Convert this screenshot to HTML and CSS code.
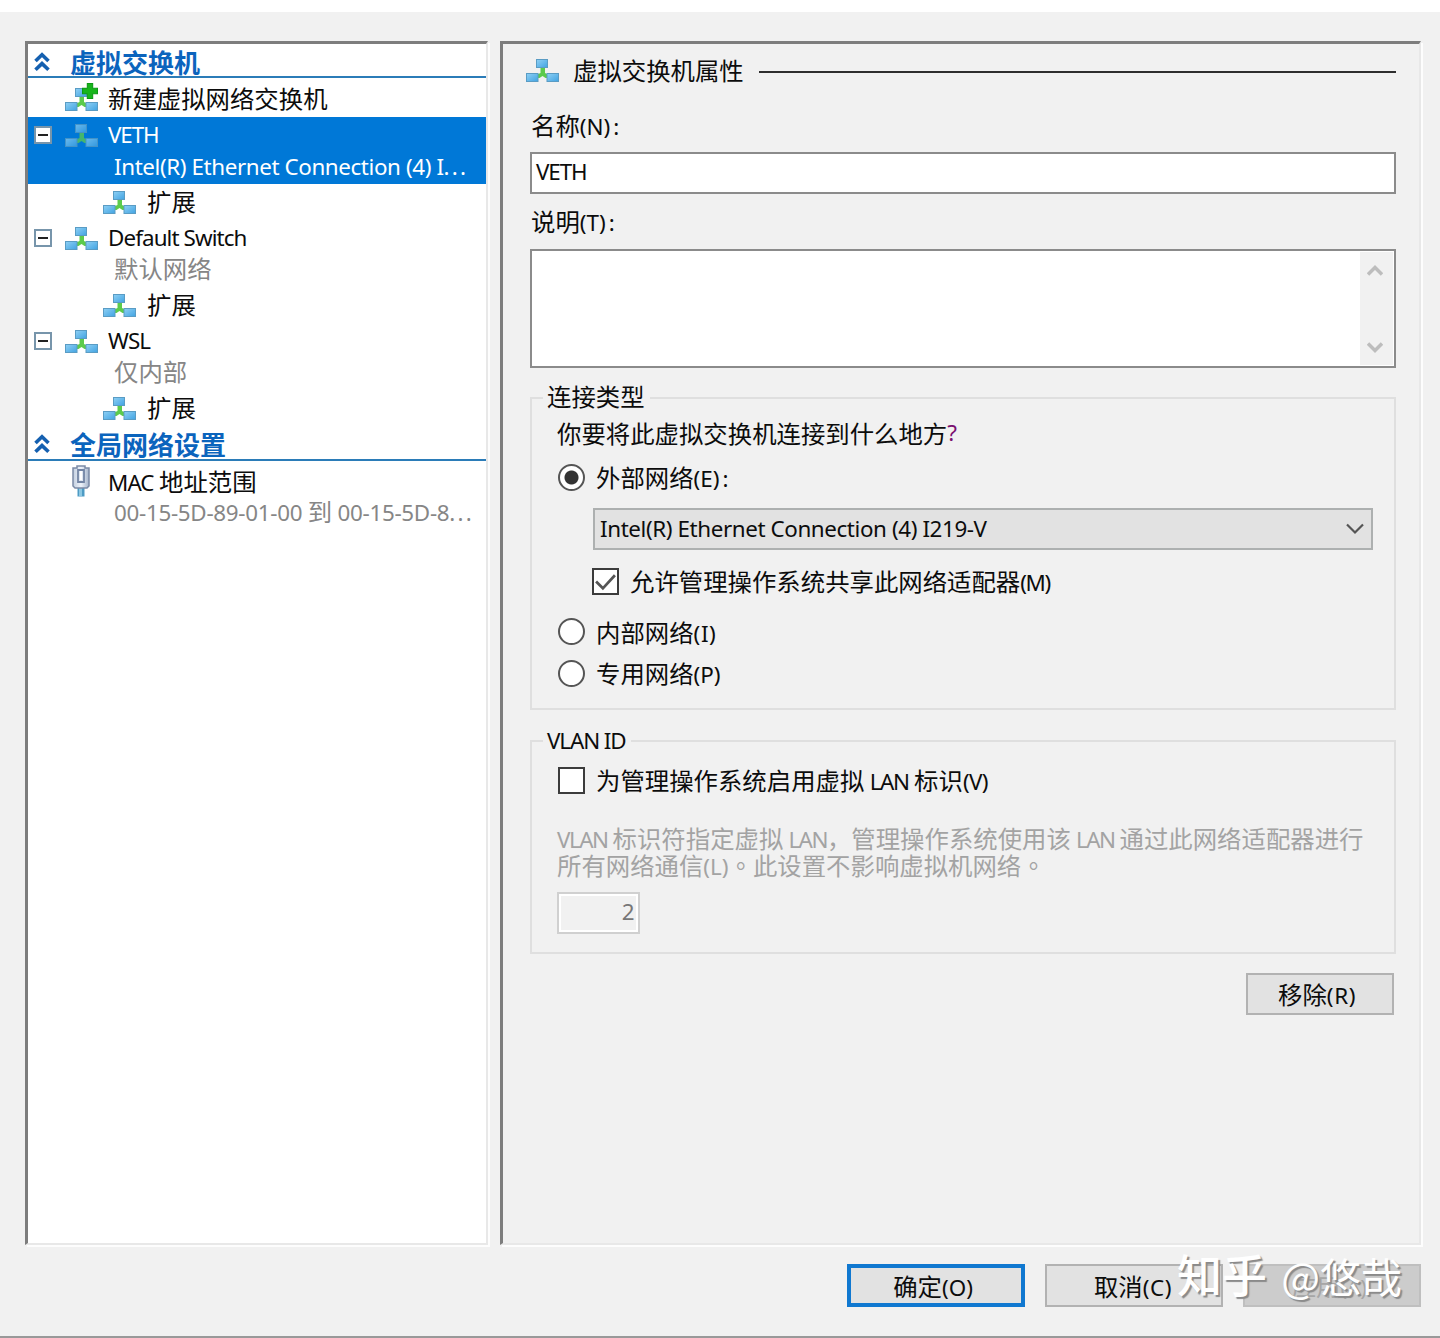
FILE: index.html
```html
<!DOCTYPE html>
<html lang="zh-CN">
<head>
<meta charset="utf-8">
<title>虚拟交换机管理器</title>
<link rel="stylesheet" href="styles.css">
</head>
<body>
<svg width="0" height="0" class="defs">
  <defs>
    <linearGradient id="blue" x1="0" y1="0" x2="1" y2="1">
      <stop offset="0" stop-color="#8fd0f4"/><stop offset="1" stop-color="#41a3e2"/>
    </linearGradient>
    <linearGradient id="plug" x1="0" y1="0" x2="1" y2="0">
      <stop offset="0" stop-color="#c3cfe0"/><stop offset=".5" stop-color="#eef3fa"/><stop offset="1" stop-color="#a3b3ca"/>
    </linearGradient>
    <symbol id="switch" viewBox="0 0 33 23">
      <path d="M14.500 8H19V14L23 16V19H19.500L16.500 17L13.500 19H10V16L14.500 14z" fill="#5ccb4c"/>
      <g fill="url(#blue)" stroke="#5a9cc4" stroke-width="1">
        <rect x="10.500" y=".5" width="11" height="8"/>
        <rect x=".5" y="14.500" width="11.500" height="8"/>
        <rect x="21" y="14.500" width="11.500" height="8"/>
      </g>
    </symbol>
    <symbol id="chevrons" viewBox="0 0 16 20">
      <path d="M1.500 9L8 2.800L14.500 9M1.500 17.800L8 11.600L14.500 17.800" fill="none" stroke="#1560b0" stroke-width="3.600"/>
    </symbol>
  </defs>
</svg>
<main class="dialog">
  <div class="panels">
    <nav class="panel tree">
      <div class="head"><svg class="chev"><use href="#chevrons"/></svg>虚拟交换机</div>
      <div class="row new"><span class="icon-wrap"><svg class="icon"><use href="#switch"/></svg><svg class="plus" viewBox="0 0 15 15"><path d="M5 .5h5V5h4.500v5H10v4.500H5V10H.5V5H5z" fill="#17b51c" stroke="#0c9a14"/></svg></span>新建虚拟网络交换机</div>
      <div class="item selected">
        <div class="row"><span class="toggle"></span><svg class="icon"><use href="#switch"/></svg><span class="en veth">VETH</span></div>
        <div class="sub"><span class="en long">Intel(R) Ethernet Connection (4) I<span class="dots">...</span></span></div>
      </div>
      <div class="row ext"><svg class="icon"><use href="#switch"/></svg>扩展</div>
      <div class="item">
        <div class="row"><span class="toggle"></span><svg class="icon"><use href="#switch"/></svg><span class="en default">Default Switch</span></div>
        <div class="sub">默认网络</div>
      </div>
      <div class="row ext"><svg class="icon"><use href="#switch"/></svg>扩展</div>
      <div class="item">
        <div class="row"><span class="toggle"></span><svg class="icon"><use href="#switch"/></svg><span class="en default">WSL</span></div>
        <div class="sub">仅内部</div>
      </div>
      <div class="row ext"><svg class="icon"><use href="#switch"/></svg>扩展</div>
      <div class="head second"><svg class="chev"><use href="#chevrons"/></svg>全局网络设置</div>
      <div class="row mac">
        <svg class="jack" viewBox="0 0 18 32"><path d="M5.500 23h7v8.500h-7z" fill="#4d9bc4"/><path d="M7 23h3v8H7z" fill="#8cc7e2"/><path d="M1 3H5V1H13V3H17V21L15 23H3L1 21z" fill="url(#plug)" stroke="#7b8ba6" stroke-width="1.500"/><path d="M6 5H12V17H6z" fill="#dfe7f2" stroke="#7385a5" stroke-width="1.800"/><path d="M9 6V15" stroke="#fff" stroke-width="2"/></svg>
        <span><span class="en default">MAC</span> 地址范围</span>
      </div>
      <div class="sub"><span class="en digits">00-15-5D-89-01-00</span> 到 <span class="en digits">00-15-5D-8<span class="dots">...</span></span></div>
    </nav>

    <section class="panel props">
      <h1 class="title"><svg class="icon"><use href="#switch"/></svg><span>虚拟交换机属性</span><i class="rule"></i></h1>
      <div class="label">名称<span class="en key">(N)<span class="colon">:</span></span></div>
      <div class="input"><span class="en veth">VETH</span></div>
      <div class="label desc">说明<span class="en key">(T)<span class="colon">:</span></span></div>
      <div class="textarea">
        <div class="scroll">
          <svg class="arrow" viewBox="0 0 16 12"><path d="M1 10.500L8 3.500L15 10.500" /></svg>
          <svg class="arrow" viewBox="0 0 16 12"><path d="M1 1.500L8 8.500L15 1.500" /></svg>
        </div>
      </div>

      <fieldset class="group type">
        <legend>连接类型</legend>
        <div class="line">你要将此虚拟交换机连接到什么地方<span class="en question">?</span></div>
        <div class="line"><span class="radio on"></span><span>外部网络<span class="en key">(E)<span class="colon">:</span></span></span></div>
        <div class="combo"><span class="en long">Intel(R) Ethernet Connection (4) I219-V</span><svg class="drop" viewBox="0 0 18 12"><path d="M1 1.500L9 9.500L17 1.500" /></svg></div>
        <div class="line share"><span class="check"><svg viewBox="0 0 22 22"><path d="M2 11L8.500 17.500L20 5" /></svg></span><span>允许管理操作系统共享此网络适配器<span class="en tight">(M)</span></span></div>
        <div class="line internal"><span class="radio"></span><span>内部网络<span class="en key wide">(I)</span></span></div>
        <div class="line"><span class="radio"></span><span>专用网络<span class="en key">(P)</span></span></div>
      </fieldset>

      <fieldset class="group vlan">
        <legend><span class="en veth">VLAN ID</span></legend>
        <div class="line enable"><span class="check"></span><span>为管理操作系统启用虚拟 <span class="en tight">LAN</span> 标识<span class="en">(V)</span></span></div>
        <p class="note"><span class="en">VLAN</span> 标识符指定虚拟 <span class="en">LAN</span>，管理操作系统使用该 <span class="en">LAN</span> 通过此网络适配器进行<br>所有网络通信<span class="en key">(L)</span><span lang="zh-TW" class="punct">。</span>此设置不影响虚拟机网络<span lang="zh-TW" class="punct">。</span></p>
        <div class="number"><span class="en">2</span></div>
      </fieldset>
      <div class="button remove"><span>移除<span class="en wide">(R)</span></span></div>
    </section>
  </div>

  <footer class="actions">
    <div class="button primary"><span>确定<span class="en key">(O)</span></span></div>
    <div class="button cancel"><span>取消<span class="en wide">(C)</span></span></div>
    <div class="button disabled"><span>应用<span class="en">(A)</span></span></div>
    <div class="watermark"><span class="brand">知乎</span> @悠哉</div>
  </footer>
</main>
</body>
</html>
```
FILE: styles.css
```css
* { box-sizing: border-box; }
body {
  margin: 0;
  padding-top: 12px;
  height: 1338px;
  background: #fff;
  color: #0c0c0c;
  font: 24.4px/26px "Noto Sans CJK SC", sans-serif;
  white-space: nowrap;
  overflow: hidden;
}
.defs { position: absolute; }
.dialog {
  height: 1326px;
  padding: 29px 19px 0 25px;
  background: #f1f1f1;
  border-bottom: 2px solid #999;
}

/* Latin runs, set slightly smaller than the Chinese text */
.en { font-family: "Noto Sans", sans-serif; font-size: 22.4px; line-height: 0; letter-spacing: -0.6px; }
.veth { letter-spacing: -1.1px; }
.default { letter-spacing: -0.9px; }
.long { letter-spacing: -0.4px; }
.digits { letter-spacing: -0.3px; }
.tight { letter-spacing: -1.4px; }
.key { letter-spacing: 0; }
.wide { letter-spacing: 0.6px; }
.dots { letter-spacing: 2.2px; }
.colon { margin-left: 3px; }
.question { color: #7a1070; }

.panels { display: flex; gap: 12px; height: 1204px; }
.panel {
  border: 3px solid;
  border-color: #7d7d7d #e8e8e8 #e8e8e8 #7d7d7d;
  border-right-width: 2px;
  border-bottom-width: 2px;
  box-shadow: 2px 2px 0 #fdfdfd;
}
.tree { width: 463px; background: #fff; }
.props { flex: 1; padding: 0 23px 0 27px; }

/* tree */
.head {
  display: flex;
  align-items: center;
  height: 34px;
  padding: 3px 0 0 6px;
  border-bottom: 2px solid #2b7cb8;
  color: #0b64bd;
  font-size: 26px;
  font-weight: 700;
}
.head.second { height: 35px; }
.chev { width: 16px; height: 20px; margin-right: 20px; }
.row { display: flex; align-items: center; height: 36px; }
.icon { width: 33px; height: 23px; flex: none; }
.new { height: 39px; padding: 1px 0 0 37px; }
.icon-wrap { position: relative; display: flex; margin: 2px 10px 0 0; }
.plus { position: absolute; left: 17px; top: -5px; width: 16px; height: 16px; }
.toggle {
  width: 18px;
  height: 18px;
  margin: 0 13px 0 6px;
  border: 2px solid #7795ab;
  background: linear-gradient(#222, #222) center / 10px 2px no-repeat #fff;
}
.item { height: 67px; }
.item .icon { margin-right: 10px; }
.sub { padding-left: 86px; line-height: 23px; color: #868686; }
.selected, .selected .sub { color: #fff; background: #0078d7; }
.selected .icon { opacity: .75; }
.ext { padding: 0 0 2px 75px; }
.ext .icon { margin: 2px 11px 0 0; }
.mac { height: 38px; padding: 2px 0 0 44px; }
.jack { width: 18px; height: 32px; margin-right: 18px; }

/* properties */
.title { display: flex; align-items: center; height: 54px; margin: 0 0 0 -4px; padding-bottom: 2px; font-size: 24.4px; font-weight: 400; }
.title .icon { margin: 1px 14px 0 0; }
.rule { flex: 1; height: 2px; margin: 3px 0 0 15px; background: #2e2e2e; }
.label { height: 54px; line-height: 53px; padding-left: 1px; }
.desc { height: 55px; }
.input, .textarea { border: 2px solid #8b8b8b; background: #fff; }
.input { display: flex; align-items: center; height: 42px; padding: 0 0 2px 4px; }
.textarea { display: flex; justify-content: flex-end; height: 119px; padding: 1px; }
.scroll {
  display: flex;
  flex-direction: column;
  align-items: center;
  justify-content: space-between;
  width: 33px;
  padding: 12px 3px 11px 0;
  background: #f1f1f1;
}
.arrow { width: 16px; height: 12px; fill: none; stroke: #bdbdbd; stroke-width: 3.5; }
.group { margin: 17px 0 0; padding: 0 0 0 26px; border: 2px solid #dfdfdf; min-width: 0; }
.type { height: 325px; }
.vlan { height: 226px; margin-top: 18px; }
legend { height: 26px; margin-left: -15px; padding: 0 5px 0 4px; line-height: 22px; }
.line { display: flex; align-items: center; height: 44px; margin-left: -1px; }
.radio {
  width: 27px;
  height: 27px;
  margin: 0 11px 0 1px;
  border: 2px solid #555;
  border-radius: 50%;
  background: #fff;
}
.radio.on { background: radial-gradient(circle, #333 6.5px, #fff 7.5px); }
.combo {
  display: flex;
  align-items: center;
  justify-content: space-between;
  height: 42px;
  margin: 9px 21px 0 35px;
  padding: 0 7px 0 5px;
  border: 2px solid #adb0b0;
  background: #e2e2e2;
}
.drop { width: 18px; height: 12px; fill: none; stroke: #555; stroke-width: 2.2; }
.check { width: 27px; height: 27px; margin: 0 11px 0 1px; border: 2px solid #3c3c3c; background: #fff; }
.check svg { display: block; width: 23px; height: 23px; fill: none; stroke: #555; stroke-width: 2.6; }
.share { height: 62px; margin-left: 33px; }
.internal { height: 39px; }
.enable { height: 52px; }
.note { margin: 18px 0 14px -1px; line-height: 27px; word-spacing: -0.4px; color: #a3a3a3; }
.note .en:not(.key) { letter-spacing: -1.5px; }
.punct { font-family: "Noto Sans CJK TC", sans-serif; line-height: 0; }
.number {
  display: flex;
  align-items: center;
  justify-content: flex-end;
  width: 83px;
  height: 42px;
  margin-left: -1px;
  padding: 0 4px 2px 0;
  border: 2px solid #d0d0d0;
  box-shadow: inset 0 0 0 2px #fff;
  color: #777;
}
.button {
  display: flex;
  align-items: center;
  justify-content: center;
  width: 178px;
  height: 43px;
  border: 2px solid #b2b2b2;
  background: #e2e2e2;
}
.remove { width: 148px; height: 42px; margin: 19px 2px 0 auto; padding-right: 6px; }
.actions { position: relative; display: flex; justify-content: flex-end; gap: 20px; margin-top: 19px; }
.actions .button { padding-right: 6px; }
.actions .cancel { padding-right: 2px; }
.primary { border: 4px solid #1078d0; }
.disabled { border-color: #bfbfbf; background: #ccc; color: #a6a6a6; }
.watermark {
  position: absolute;
  right: 19px;
  top: -14px;
  font-size: 41px;
  line-height: 50px;
  color: #fff;
  text-shadow: 2px 2px 1px #8a8a8a;
}
.brand { font-size: 45px; font-weight: 500; line-height: 0; margin-right: 5px; }
```
